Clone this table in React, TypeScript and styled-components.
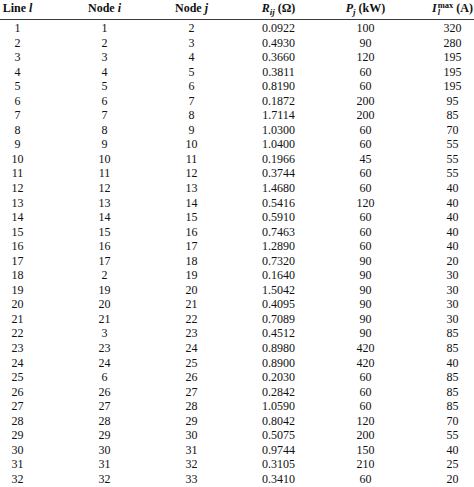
import styled, { createGlobalStyle } from 'styled-components'

const GlobalStyle = createGlobalStyle`
  html, body {
    margin: 0;
    padding: 0;
    background: #fff;
    overflow: hidden;
  }
  body {
    font-family: "Liberation Serif", "Times New Roman", serif;
    color: #111;
  }
`

// the original figure is cropped, so the first column starts off-page
const Table = styled.div`
  display: grid;
  grid-template-columns: repeat(6, 87px);
  margin-left: -26px;
  width: 522px;
  font-size: 12px;
`

const Head = styled.div`
  box-sizing: border-box;
  height: 20px;
  text-align: center;
  font-weight: bold;
  line-height: 14px;
  padding-top: 1px;
  border-bottom: 1px solid #3a3a3a;
  white-space: nowrap;
`

const Cell = styled.div<{ $first?: boolean }>`
  text-align: center;
  line-height: 14.55px;
  padding-top: ${(p) => (p.$first ? '1px' : '0')};
`

const Sym = styled.i``

const Sub = styled.sub`
  font-size: 9px;
  font-style: italic;
  vertical-align: -3px;
  line-height: 0;
`

const SupSub = styled.span`
  display: inline-flex;
  flex-direction: column;
  align-items: flex-start;
  vertical-align: 4px;
  font-size: 8.5px;
  line-height: 7px;
  margin-left: 1px;
`

const rows: [number, number, number, string, number, number][] = [
  [1, 1, 2, '0.0922', 100, 320],
  [2, 2, 3, '0.4930', 90, 280],
  [3, 3, 4, '0.3660', 120, 195],
  [4, 4, 5, '0.3811', 60, 195],
  [5, 5, 6, '0.8190', 60, 195],
  [6, 6, 7, '0.1872', 200, 95],
  [7, 7, 8, '1.7114', 200, 85],
  [8, 8, 9, '1.0300', 60, 70],
  [9, 9, 10, '1.0400', 60, 55],
  [10, 10, 11, '0.1966', 45, 55],
  [11, 11, 12, '0.3744', 60, 55],
  [12, 12, 13, '1.4680', 60, 40],
  [13, 13, 14, '0.5416', 120, 40],
  [14, 14, 15, '0.5910', 60, 40],
  [15, 15, 16, '0.7463', 60, 40],
  [16, 16, 17, '1.2890', 60, 40],
  [17, 17, 18, '0.7320', 90, 20],
  [18, 2, 19, '0.1640', 90, 30],
  [19, 19, 20, '1.5042', 90, 30],
  [20, 20, 21, '0.4095', 90, 30],
  [21, 21, 22, '0.7089', 90, 30],
  [22, 3, 23, '0.4512', 90, 85],
  [23, 23, 24, '0.8980', 420, 85],
  [24, 24, 25, '0.8900', 420, 40],
  [25, 6, 26, '0.2030', 60, 85],
  [26, 26, 27, '0.2842', 60, 85],
  [27, 27, 28, '1.0590', 60, 85],
  [28, 28, 29, '0.8042', 120, 70],
  [29, 29, 30, '0.5075', 200, 55],
  [30, 30, 31, '0.9744', 150, 40],
  [31, 31, 32, '0.3105', 210, 25],
  [32, 32, 33, '0.3410', 60, 20],
]

const App = () => (
  <>
    <GlobalStyle />
    <Table>
      <Head>
        Line <Sym>l</Sym>
      </Head>
      <Head>
        Node <Sym>i</Sym>
      </Head>
      <Head>
        Node <Sym>j</Sym>
      </Head>
      <Head>
        <Sym>R</Sym>
        <Sub>ij</Sub> (Ω)
      </Head>
      <Head>
        <Sym>P</Sym>
        <Sub>j</Sub> (kW)
      </Head>
      <Head>
        <Sym>I</Sym>
        <SupSub>
          <span>max</span>
          <i>l</i>
        </SupSub>{' '}
        (A)
      </Head>
      {rows.map((r, i) =>
        r.map((v, k) => (
          <Cell key={`${i}-${k}`} $first={i === 0}>
            {v}
          </Cell>
        ))
      )}
    </Table>
  </>
)

export default App
